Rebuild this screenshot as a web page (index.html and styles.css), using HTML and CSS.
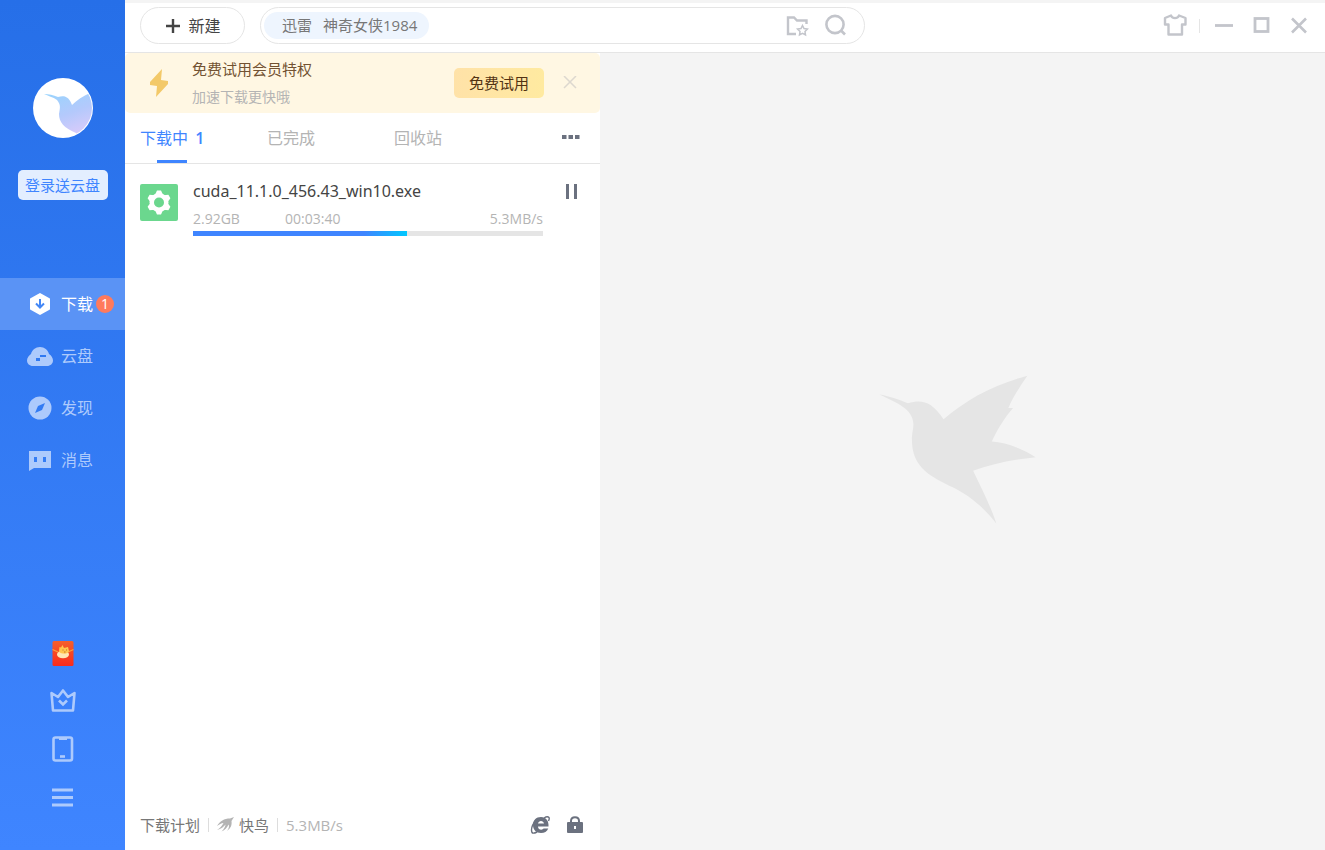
FILE: index.html
```
<!DOCTYPE html>
<html lang="zh-CN">
<head>
    <meta charset="UTF-8">
    <meta name="viewport" content="width=device-width, initial-scale=1.0">
    <title>迅雷</title>
    <link rel="stylesheet" href="styles.css">
</head>
<body>
    <aside class="sidebar">
        <svg class="avatar" viewBox="0 0 60 60" role="img" aria-label="头像">
            <defs>
                <linearGradient id="wing" x1="0.2" y1="0" x2="0.6" y2="1">
                    <stop offset="0" stop-color="#9bd3fd"/>
                    <stop offset="0.5" stop-color="#b4c9fc"/>
                    <stop offset="1" stop-color="#dccbfa"/>
                </linearGradient>
                <clipPath id="round"><circle cx="30" cy="30" r="29"/></clipPath>
            </defs>
            <circle cx="30" cy="30" r="30" fill="#fff"/>
            <path clip-path="url(#round)" fill="url(#wing)" d="M11 16C16 16 20 17 25 19C32 17 36 19 39 27C44 22 50 18 57 15L60 30V60H46L43 55C31 50 26 44 26 36C27 29 28 27 24 22C20 19 15 18 11 16Z"/>
        </svg>
        <button class="login-btn">登录送云盘</button>

        <nav class="menu">
            <a href="#" class="menu-item active">
                <svg class="icon" viewBox="0 0 26 26">
                    <path fill="currentColor" stroke="currentColor" stroke-width="2" stroke-linejoin="round" d="M13 3L22 8V18L13 23L4 18V8Z"/>
                    <path fill="none" stroke="#4387f6" stroke-width="2" d="M13 8V16M9 12.500L13 16.500L17 12.500"/>
                </svg>
                <span>下载</span>
                <span class="badge">1</span>
            </a>
            <a href="#" class="menu-item">
                <svg class="icon" viewBox="0 0 26 26">
                    <path fill="currentColor" d="M6 23C2.500 23 0 20.500 0 17.500C0 14.500 2 12.500 4 11C5 7 8.500 4 13 4C17.500 4 21 7 22 11C24.500 12.500 26 15 26 17.500C26 20.500 23.500 23 20 23Z"/>
                    <path fill="#3079f2" d="M13 12H19V14H13ZM9 15H13V18H9Z"/>
                </svg>
                <span>云盘</span>
            </a>
            <a href="#" class="menu-item">
                <svg class="icon" viewBox="0 0 26 26">
                    <circle cx="13" cy="13" r="11.500" fill="currentColor"/>
                    <path fill="#337bf3" d="M18 8L15 15L8 18L11 11Z"/>
                </svg>
                <span>发现</span>
            </a>
            <a href="#" class="menu-item">
                <svg class="icon" viewBox="0 0 26 26">
                    <path fill="currentColor" d="M2 4H24V21H7L2 24Z"/>
                    <path fill="#357df5" d="M7 10H10V15H7ZM16 10H19V15H16Z"/>
                </svg>
                <span>消息</span>
            </a>
        </nav>

        <div class="tools">
            <button class="tool" aria-label="红包">
                <svg class="icon" viewBox="0 0 26 26">
                    <defs>
                        <linearGradient id="packet" x1="0" y1="0" x2="0" y2="1">
                            <stop offset="0" stop-color="#f4602c"/>
                            <stop offset="1" stop-color="#f92a1c"/>
                        </linearGradient>
                    </defs>
                    <rect x="2.500" y="1" width="21" height="25" rx="1.500" fill="url(#packet)"/>
                    <path d="M2.500 9.500L8 12M23.500 9.500L18 12" stroke="#f9a03c" stroke-width="1.200"/>
                    <ellipse cx="13" cy="14.500" rx="6" ry="3.800" fill="#ffe6b4"/>
                    <path fill="#ffc64e" d="M9 11L9.500 7L11 7.500L12.500 5L14 8L18 7L19 11C18.500 13 15.500 14 13 13.500C11 13.500 9 12.500 9 11Z"/>
                    <path fill="#c0702b" d="M12.500 9.500H13.500V10.500H12.500ZM16 9.500H17V10.500H16ZM14 11.500H15.500V12.500H14Z"/>
                </svg>
            </button>
            <button class="tool" aria-label="会员">
                <svg class="icon" viewBox="0 0 26 26" fill="none" stroke="currentColor" stroke-width="2.600">
                    <path stroke-linejoin="round" d="M1.500 5L8 9L13 2.500L18 9L24.500 5L23 22.500H3Z"/>
                    <path d="M9 12.500L13 16.500L17 12.500"/>
                </svg>
            </button>
            <button class="tool" aria-label="手机">
                <svg class="icon" viewBox="0 0 26 26" fill="none" stroke="currentColor">
                    <rect x="3.500" y="1.500" width="18.500" height="23" rx="2" stroke-width="2.600"/>
                    <path stroke-width="2" d="M9 3H17"/>
                    <path stroke-width="2.600" d="M10 20.500H15"/>
                </svg>
            </button>
            <button class="tool" aria-label="菜单">
                <svg class="icon" viewBox="0 0 26 26" stroke="currentColor" stroke-width="2.800">
                    <path d="M2 6H23M2 13.500H23M2 21H23"/>
                </svg>
            </button>
        </div>
    </aside>

    <div class="main">
        <header class="topbar">
            <button class="new-btn">
                <svg viewBox="0 0 14 14" width="14" height="14" stroke="currentColor" stroke-width="2.400"><path d="M0 7H14M7 0V14"/></svg>
                新建
            </button>
            <form class="search">
                <button type="button" class="hot"><span>迅雷</span><span>神奇女侠1984</span></button>
                <input type="text" class="search-input" aria-label="搜索">
                <button type="button" class="icon-btn" aria-label="收藏夹">
                    <svg viewBox="0 0 24 24" width="24" height="24" fill="none" stroke="currentColor" stroke-width="2.400">
                        <path d="M11 20H3V3.500H9L12 6.500H21.500V10"/>
                        <path stroke-width="1.500" d="M17.500 11.500L19 14.500L22.500 15L20 17.500L20.500 21L17.500 19.400L14.500 21L15 17.500L12.500 15L16 14.500Z"/>
                    </svg>
                </button>
                <button type="button" class="icon-btn" aria-label="搜索">
                    <svg viewBox="0 0 24 24" width="24" height="24" fill="none" stroke="currentColor" stroke-width="2.600">
                        <circle cx="12" cy="10.500" r="8.600"/><path d="M18 16.500L22 20.500"/>
                    </svg>
                </button>
            </form>
            <div class="window-btns">
                <button class="icon-btn skin" aria-label="皮肤">
                    <svg viewBox="0 0 24 24" width="24" height="24" fill="none" stroke="currentColor" stroke-width="2.400" stroke-linejoin="round">
                        <path d="M8 1.500C9 5 15 5 16 1.500L22.500 4V10.500H19V20.500H5.500V10.500H2V4Z"/>
                    </svg>
                </button>
                <button class="icon-btn" aria-label="最小化">
                    <svg viewBox="0 0 18 18" width="18" height="18" stroke="currentColor" stroke-width="2.800"><path d="M0 8.500H18"/></svg>
                </button>
                <button class="icon-btn" aria-label="最大化">
                    <svg viewBox="0 0 18 18" width="18" height="18" fill="none" stroke="currentColor" stroke-width="2.800"><rect x="2" y="1.500" width="13" height="13"/></svg>
                </button>
                <button class="icon-btn" aria-label="关闭">
                    <svg viewBox="0 0 18 18" width="18" height="18" stroke="currentColor" stroke-width="2.600"><path d="M1 1.500L15 15.500M15 1.500L1 15.500"/></svg>
                </button>
            </div>
        </header>

        <div class="content">
            <section class="panel">
                <div class="banner">
                    <svg class="bolt" viewBox="0 0 20 28" width="20" height="28"><path fill="#f3c969" d="M13 0L12 11L19 12V15L7 28L8 17L1 16V13Z"/></svg>
                    <div class="banner-text">
                        <p class="banner-title">免费试用会员特权</p>
                        <p class="banner-sub">加速下载更快哦</p>
                    </div>
                    <button class="trial-btn">免费试用</button>
                    <button class="icon-btn banner-close" aria-label="关闭">
                        <svg viewBox="0 0 14 14" width="14" height="14" stroke="currentColor" stroke-width="1.500"><path d="M1 0L13 12M13 0L1 12"/></svg>
                    </button>
                </div>

                <nav class="tabs">
                    <div class="tab"><a href="#" class="active">下载中 <b>1</b></a></div>
                    <div class="tab"><a href="#">已完成</a></div>
                    <div class="tab"><a href="#">回收站</a></div>
                    <button class="icon-btn dark more" aria-label="更多">
                        <svg viewBox="0 0 18 6" width="18" height="6" fill="currentColor"><path d="M0 0H4.500V4H0ZM6.500 0H11V4H6.500ZM13 0H17.500V4H13Z"/></svg>
                    </button>
                </nav>

                <div class="task">
                    <svg class="file-icon" viewBox="0 0 38 38" width="38" height="38">
                        <rect width="38" height="37" rx="2" fill="#6bd78e"/>
                        <g fill="#fff">
                            <circle cx="19" cy="18.500" r="9.500"/>
                            <path id="tooth" d="M15 11L17 6.500H21L23 11V26L21 30.500H17L15 26Z"/>
                            <use href="#tooth" transform="rotate(60 19 18.500)"/>
                            <use href="#tooth" transform="rotate(120 19 18.500)"/>
                        </g>
                        <circle cx="19" cy="18.500" r="5" fill="#6bd78e"/>
                    </svg>
                    <div class="task-info">
                        <p class="task-name">cuda_11.1.0_456.43_win10.exe</p>
                        <div class="task-meta">
                            <span class="size">2.92GB</span>
                            <span>00:03:40</span>
                            <span class="speed">5.3MB/s</span>
                        </div>
                        <div class="progress" role="progressbar" aria-label="下载进度" aria-valuenow="61" aria-valuemin="0" aria-valuemax="100">
                            <div class="progress-bar" style="width: 61%"></div>
                        </div>
                    </div>
                    <button class="icon-btn dark pause" aria-label="暂停">
                        <svg viewBox="0 0 12 16" width="12" height="16" fill="currentColor"><path d="M0 0H3V15H0ZM8 0H11V15H8Z"/></svg>
                    </button>
                </div>

                <footer class="footer">
                    <a href="#">下载计划</a>
                    <a href="#" class="bird-link">
                        <svg viewBox="0 0 18 16" width="18" height="16" fill="#b4b4b4"><path d="M17 0L14.500 4C15 8 14 11 10 14C12 11 12.500 9 11.500 7.500C10.500 10 8 13 4.500 14.500C7 12 8.500 9.500 8.500 7.500C7 9.500 4 12 0 13C3 11 5.500 8.500 6.500 6C4.500 6.200 2 7.500 0 9C3 4 7 1.500 13 1.500Z"/></svg>
                        快鸟
                    </a>
                    <span class="total-speed">5.3MB/s</span>
                    <button class="icon-btn dark ie" aria-label="浏览器">
                        <svg viewBox="0 0 20 20" width="20" height="20">
                            <path fill="none" stroke="currentColor" stroke-width="1.400" d="M6 5C2 10 1 15 2 17.500C3 19 5 18 7 17M14 3C16.500 1.500 18 1.500 19 2.500C19.500 3.500 19 5 18.500 6"/>
                            <path fill="currentColor" fill-rule="evenodd" d="M11 2C16 2 19 6 18.500 11.500H8C8 15 12.500 15.500 13.500 13.500H18.300C17 16.500 14.500 18 11 18C6 18 3 14.500 3 10C3 5.500 6 2 11 2ZM8 8.500H14C13.500 5 8.500 5 8 8.500Z"/>
                        </svg>
                    </button>
                    <button class="icon-btn dark" aria-label="私人空间">
                        <svg viewBox="0 0 16 18" width="16" height="18">
                            <path fill="none" stroke="currentColor" stroke-width="2" d="M4 8V5C4 0 12 0 12 5V8"/>
                            <rect y="6" width="16" height="11" rx="1" fill="currentColor"/>
                            <path fill="#fff" d="M7 10H9V13H7Z"/>
                        </svg>
                    </button>
                </footer>
            </section>

            <section class="detail">
                <svg viewBox="57 45 472 448" width="157" height="149">
                    <path fill="#e5e5e5" d="M58 104C85 108 118 120 144 130C185 119 213 122 251 178C320 118 400 75 503 47C480 80 460 112 446 144L460 144C435 172 412 210 396 245C440 248 490 267 528 292C460 299 395 312 340 333C365 385 395 445 410 492C370 440 320 400 268 378C200 345 156 315 156 240C156 215 162 205 160 188C157 150 115 130 58 104Z"/>
                </svg>
            </section>
        </div>
    </div>
</body>
</html>
```
FILE: styles.css
```
* {
    margin: 0;
    padding: 0;
    box-sizing: border-box;
}

body {
    display: flex;
    min-height: 100vh;
    font-family: "Open Sans", "Noto Sans CJK SC", sans-serif;
    font-size: 15px;
    line-height: 20px;
    color: #444;
    background-color: #f4f4f4;
}

button,
input {
    font: inherit;
    color: inherit;
    border: none;
    background: none;
}

button {
    cursor: pointer;
}

a {
    color: inherit;
    text-decoration: none;
}

svg {
    display: block;
    flex: none;
}

/* Sidebar */
.sidebar {
    display: flex;
    flex-direction: column;
    align-items: center;
    flex: none;
    width: 125px;
    padding: 78px 0 29px;
    background: linear-gradient(#266fe8, #3f85ff);
}

.avatar {
    width: 60px;
    height: 60px;
}

.login-btn {
    width: 90px;
    height: 30px;
    margin-top: 32px;
    border-radius: 5px;
    color: #3f85ff;
    background-color: #e3eeff;
}

.menu {
    width: 100%;
    margin-top: 78px;
}

.menu-item {
    display: flex;
    align-items: center;
    height: 52px;
    padding-left: 27px;
    font-size: 16px;
    color: #adcafc;
}

.menu-item.active {
    color: #fff;
    background-color: #5a93f5;
}

.icon {
    width: 26px;
    height: 26px;
}

.menu-item .icon {
    margin-right: 8px;
}

.badge {
    width: 18px;
    height: 18px;
    margin-left: 3px;
    border-radius: 9px;
    font-size: 14px;
    line-height: 18px;
    text-align: center;
    background-color: #ff7a5c;
}

.tools {
    margin-top: auto;
}

.tool {
    display: flex;
    align-items: center;
    height: 48px;
    color: #adcafc;
}

/* Top bar */
.main {
    display: flex;
    flex-direction: column;
    flex: 1;
    min-width: 0;
}

.topbar {
    display: flex;
    align-items: center;
    height: 53px;
    padding: 0 16px 4px 15px;
    border-top: 3px solid #f4f4f4;
    border-bottom: 1px solid #e5e5e5;
    background-color: #fff;
}

.new-btn {
    display: flex;
    align-items: center;
    justify-content: center;
    gap: 8px;
    width: 105px;
    height: 37px;
    padding-left: 2px;
    border: 1px solid #e5e5e5;
    border-radius: 19px;
    font-size: 16px;
}

.search {
    display: flex;
    align-items: center;
    flex: 0 1 605px;
    height: 37px;
    margin-left: 15px;
    padding: 0 17px 0 3px;
    border: 1px solid #e5e5e5;
    border-radius: 19px;
}

.hot {
    display: flex;
    gap: 11px;
    height: 27px;
    padding: 0 12px 0 18px;
    border-radius: 14px;
    line-height: 27px;
    white-space: nowrap;
    color: #777;
    background-color: #eef5fe;
}

.search-input {
    flex: 1;
    min-width: 0;
    height: 35px;
    outline: none;
}

.icon-btn {
    display: flex;
    align-items: center;
    justify-content: center;
    color: #c3c5cb;
}

.icon-btn.dark {
    color: #6b717f;
}

.search .icon-btn {
    margin-left: 14px;
}

.window-btns {
    display: flex;
    align-items: center;
    gap: 20px;
    margin-left: auto;
}

.skin {
    padding-right: 12px;
    margin-right: -5px;
    border-right: 1px solid #e5e5e5;
    height: 14px;
}

/* Download list */
.content {
    display: flex;
    flex: 1;
}

.panel {
    display: flex;
    flex-direction: column;
    flex: none;
    width: 475px;
    background-color: #fff;
}

.banner {
    display: flex;
    align-items: center;
    height: 60px;
    padding: 0 23px 0 24px;
    border-radius: 5px;
    background-color: #fff7e3;
}

.banner-text {
    margin-left: 23px;
}

.banner-title {
    line-height: 28px;
    color: #725232;
}

.banner-sub {
    font-size: 14px;
    line-height: 28px;
    color: #b4b4b4;
}

.trial-btn {
    width: 90px;
    height: 30px;
    margin-left: auto;
    border-radius: 5px;
    color: #523212;
    background: linear-gradient(90deg, #ffe2a8, #ffeaa0);
}

.banner-close {
    margin-left: 19px;
    color: #ddd8cf;
}

.tabs {
    display: flex;
    height: 51px;
    padding: 0 20px 0 15px;
    border-bottom: 1px solid #e5e5e5;
    font-size: 16px;
    line-height: 50px;
    color: #b4b4b4;
}

.tab {
    width: 127px;
}

.tab a {
    position: relative;
    display: inline-block;
}

.tab .active {
    color: #3f85ff;
}

.tab .active::after {
    content: "";
    position: absolute;
    left: 50%;
    bottom: 0;
    width: 30px;
    height: 3px;
    margin-left: -15px;
    background-color: #3f85ff;
}

.tab b {
    margin-left: 3px;
    font-weight: 600;
}

.more {
    margin-left: auto;
}

.task {
    display: flex;
    align-items: flex-start;
    padding: 20px 22px 0 15px;
}

.task-info {
    flex: 1;
    margin: -5px 0 0 15px;
}

.task-name {
    font-family: "Noto Sans", "Noto Sans CJK SC", sans-serif;
    font-size: 16px;
    line-height: 24px;
}

.task-meta {
    display: flex;
    margin-top: 5px;
    font-size: 14px;
    line-height: 22px;
    color: #b4b4b4;
}

.size {
    width: 92px;
}

.speed {
    margin-left: auto;
}

.progress {
    height: 5px;
    margin-top: 1px;
    background-color: #e5e5e5;
}

.progress-bar {
    height: 100%;
    background: linear-gradient(90deg, #3f85ff 80%, #00c8ff);
}

.pause {
    margin-left: 23px;
}

.footer {
    display: flex;
    align-items: center;
    height: 50px;
    margin-top: auto;
    padding: 0 17px 0 15px;
    color: #777;
}

.bird-link {
    display: flex;
    align-items: center;
    gap: 4px;
    margin-left: 8px;
    padding: 0 8px;
}

.bird-link,
.total-speed {
    height: 14px;
    line-height: 14px;
    border-left: 1px solid #ddd;
}

.total-speed {
    padding-left: 8px;
    color: #b4b4b4;
}

.ie {
    margin: 0 17px 0 auto;
}

/* Empty detail area */
.detail {
    display: flex;
    align-items: center;
    justify-content: center;
    flex: 1;
    padding: 0 10px 4px 0;
}
```
